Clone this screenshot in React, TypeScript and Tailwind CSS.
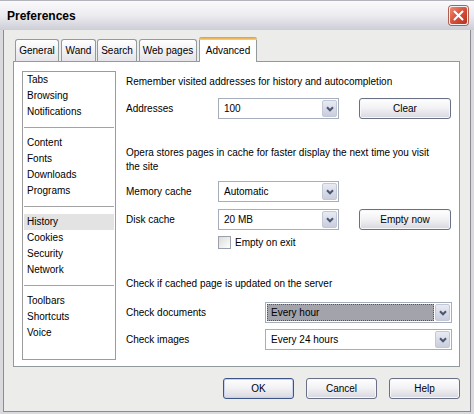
import React from "react";

function Chevron() {
  return (
    <svg width="8" height="6" viewBox="0 0 8 6">
      <path d="M1 1.2 L4 4.3 L7 1.2" stroke="#4a5672" strokeWidth="2" fill="none" />
    </svg>
  );
}

function Combo({ w, value, selected }: { w: string; value: string; selected?: boolean }) {
  return (
    <div className={`${w} h-[21px] border border-[#a7aebb] bg-white flex items-stretch p-px`}>
      {selected ? (
        <div className="flex-1 bg-[#a3a3ab] border border-dotted border-[#55555c] flex items-center pl-[3px] text-black mr-px">
          {value}
        </div>
      ) : (
        <div className="flex-1 flex items-center pl-[4px] text-black">{value}</div>
      )}
      <div className="w-[15px] rounded-[2px] border border-[#c3c8d8] bg-gradient-to-b from-[#e9ebf3] to-[#c9cddd] flex items-center justify-center">
        <Chevron />
      </div>
    </div>
  );
}

function Btn({ w, label, def }: { w: string; label: string; def?: boolean }) {
  return (
    <div
      className={`${w} h-[21px] rounded-[3px] border ${
        def
          ? "border-[#3d5488] shadow-[inset_0_0_0_1px_#c7d3ee]"
          : "border-[#6a7186] shadow-[inset_0_0_0_1px_#f7f7f9]"
      } bg-gradient-to-b from-white via-[#f1f1f4] to-[#d7d7df] flex items-center justify-center text-black`}
    >
      {label}
    </div>
  );
}

function Tab({ w, label, ml, active }: { w: string; label: string; ml: string; active?: boolean }) {
  if (active) {
    return (
      <div
        className={`${w} ${ml} h-[25px] -mb-px relative z-10 bg-white border-x border-[#919b9c] rounded-t-[3px] flex flex-col`}
      >
        <div className="h-[3px] rounded-t-[3px] bg-gradient-to-b from-[#e39a2e] to-[#fbd27a] -mx-px" />
        <div className="flex-1 flex items-center justify-center pb-[2px]">{label}</div>
      </div>
    );
  }
  return (
    <div
      className={`${w} ${ml} h-[22px] border border-b-0 border-[#919b9c] rounded-t-[3px] bg-gradient-to-b from-white to-[#e4e4e9] flex items-center justify-center`}
    >
      {label}
    </div>
  );
}

const groups = [
  ["Tabs", "Browsing", "Notifications"],
  ["Content", "Fonts", "Downloads", "Programs"],
  ["History", "Cookies", "Security", "Network"],
  ["Toolbars", "Shortcuts", "Voice"],
];

export default function App() {
  return (
    <div className="w-[474px] h-[414px] bg-[#d9d9de] flex flex-col font-['Liberation_Sans',Arial,sans-serif] text-[10px] text-black">
      <div className="h-[30px] shrink-0 flex items-center justify-between pl-[7px] pr-[6px] border-t border-[#b4b4bc] bg-gradient-to-b from-[#fafafc] via-[#ececf0] to-[#cdcdd6]">
        <span className="text-[12px] font-bold leading-none pt-px">Preferences</span>
        <div className="w-[19px] h-[19px] rounded-[3px] border border-[#f2f2f2] shadow-[0_0_0_1px_#b06050] bg-gradient-to-br from-[#ee8a72] via-[#d6503a] to-[#b8301c] flex items-center justify-center">
          <svg width="11" height="11" viewBox="0 0 11 11">
            <path d="M1.5 1.5 L9.5 9.5 M9.5 1.5 L1.5 9.5" stroke="white" strokeWidth="2" strokeLinecap="round" />
          </svg>
        </div>
      </div>
      <div className="flex-1 mx-[3px] mb-[2px] border-x border-b border-[#8a8a93] bg-[#ececea] flex flex-col pl-[9px] pr-[10px] pt-[6px]">
        <div className="h-[25px] flex items-end pl-[2px]">
          <Tab w="w-[44px]" ml="ml-0" label="General" />
          <Tab w="w-[35px]" ml="ml-[2px]" label="Wand" />
          <Tab w="w-[40px]" ml="ml-[1px]" label="Search" />
          <Tab w="w-[58px]" ml="ml-[2px]" label="Web pages" />
          <Tab w="w-[58px]" ml="ml-[2px]" label="Advanced" active />
        </div>
        <div className="h-[306px] border border-[#919b9c] bg-white flex pl-[8px] pt-[9px] pr-[7px]">
          <div className="w-[94px] h-[289px] border border-[#9c9c9c] bg-white pt-0 flex flex-col">
            {groups.map((g, gi) => (
              <div key={gi}>
                {gi > 0 && <div className="my-[7px] mx-[1px] h-px bg-[#a3a3a3]" />}
                {g.map((it) => (
                  <div
                    key={it}
                    className={`h-[16px] leading-[16px] pl-[3px] mx-px ${it === "History" ? "bg-[#e3e3e3]" : ""}`}
                  >
                    {it}
                  </div>
                ))}
              </div>
            ))}
          </div>
          <div className="flex-1 ml-[10px] pt-[4px] flex flex-col">
            <div className="h-[14px] leading-[14px]">Remember visited addresses for history and autocompletion</div>
            <div className="mt-[9px] h-[21px] flex items-center">
              <div className="w-[92px]">Addresses</div>
              <Combo w="w-[121px]" value="100" />
              <div className="ml-[20px]">
                <Btn w="w-[92px]" label="Clear" />
              </div>
            </div>
            <div className="mt-[27px] leading-[14px]">
              Opera stores pages in cache for faster display the next time you visit
              <br />
              the site
            </div>
            <div className="mt-[7px] h-[21px] flex items-center">
              <div className="w-[92px]">Memory cache</div>
              <Combo w="w-[121px]" value="Automatic" />
            </div>
            <div className="mt-[7px] h-[21px] flex items-center">
              <div className="w-[92px]">Disk cache</div>
              <Combo w="w-[121px]" value="20 MB" />
              <div className="ml-[20px]">
                <Btn w="w-[92px]" label="Empty now" />
              </div>
            </div>
            <div className="mt-[6px] h-[13px] flex items-center pl-[92px]">
              <div className="w-[13px] h-[13px] border border-[#9aa0ab] bg-gradient-to-br from-[#dcdcd7] to-white" />
              <span className="ml-[4px]">Empty on exit</span>
            </div>
            <div className="mt-[28px] h-[14px] leading-[14px]">Check if cached page is updated on the server</div>
            <div className="mt-[11px] h-[21px] flex items-center">
              <div className="w-[139px]">Check documents</div>
              <Combo w="w-[187px]" value="Every hour" selected />
            </div>
            <div className="mt-[6px] h-[21px] flex items-center">
              <div className="w-[139px]">Check images</div>
              <Combo w="w-[187px]" value="Every 24 hours" />
            </div>
          </div>
        </div>
        <div className="mt-[11px] flex justify-end gap-[12px]">
          <Btn w="w-[71px]" label="OK" def />
          <Btn w="w-[71px]" label="Cancel" />
          <Btn w="w-[71px]" label="Help" />
        </div>
      </div>
    </div>
  );
}
